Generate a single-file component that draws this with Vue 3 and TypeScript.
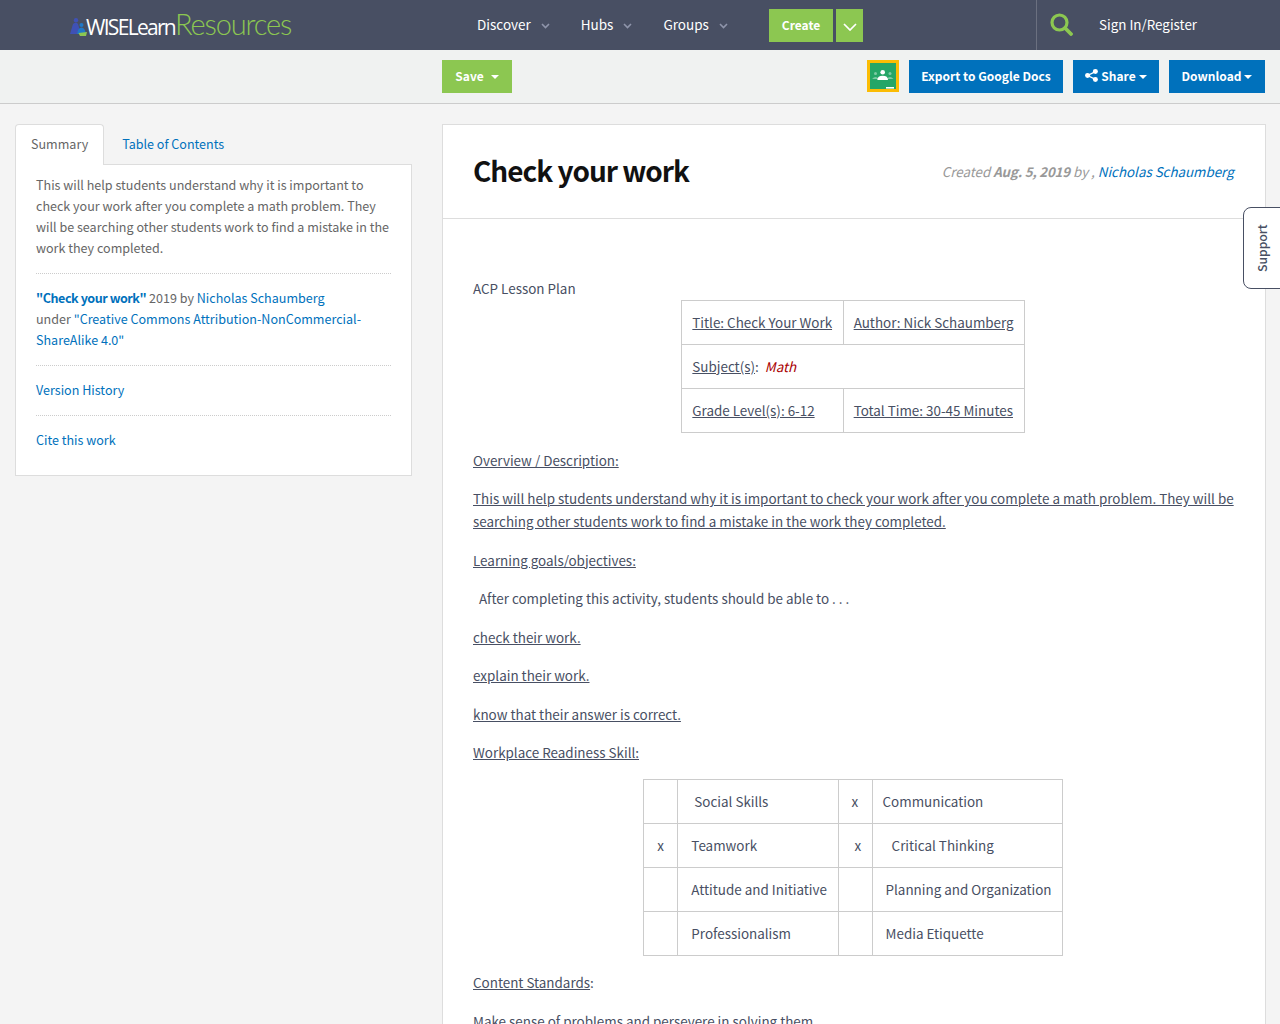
<script setup lang="ts">
const navItems: string[] = ['Discover', 'Hubs', 'Groups']
</script>

<template>
  <div class="page">
    <header class="topbar">
      <div class="logo">
        <svg class="logo-mark" width="19" height="20" viewBox="0 0 19 20">
          <circle cx="7" cy="3.2" r="2.2" fill="#3f51b5" />
          <path d="M1 17 L4 7 Q7 4.5 9 7 L10.5 12 L8 17 Z" fill="#3f51b5" />
          <circle cx="12.5" cy="8" r="2" fill="#1f78c8" />
          <path d="M8 17 Q9 10.5 12.5 10.5 Q16 10.5 17 17 Z" fill="#1f78c8" />
          <path d="M9.5 16 L18 15 L17 19 L11 19 Z" fill="#8cc751" />
        </svg>
        <span class="logo-wise">WISELearn</span><span class="logo-res">Resources</span>
      </div>
      <nav class="nav">
        <a v-for="item in navItems" :key="item" class="nav-item">
          {{ item }}
          <svg width="9" height="6" viewBox="0 0 9 6"><path d="M1 1 L4.5 4.5 L8 1" fill="none" stroke="#8f95ab" stroke-width="1.6" /></svg>
        </a>
      </nav>
      <div class="create-group">
        <button class="btn-green create">Create</button>
        <button class="btn-green create-caret">
          <svg width="14" height="8" viewBox="0 0 14 8"><path d="M1 1 L7 7 L13 1" fill="none" stroke="#fff" stroke-width="1.7" /></svg>
        </button>
      </div>
      <div class="account">
        <svg class="search" width="23" height="23" viewBox="0 0 23 23">
          <circle cx="9.5" cy="9.5" r="7.5" fill="none" stroke="#8cc751" stroke-width="3.2" />
          <path d="M15 15 L21 21" stroke="#8cc751" stroke-width="3.8" stroke-linecap="round" />
        </svg>
        <span class="signin">Sign In/Register</span>
      </div>
    </header>

    <div class="toolbar">
      <button class="btn-green save">Save <i class="caret save-caret"></i></button>
      <div class="tools">
        <span class="classroom">
          <svg width="26" height="26" viewBox="0 0 26 26">
            <rect width="26" height="26" fill="#25a667" />
            <circle cx="5.5" cy="10.5" r="1.5" fill="#7dcba3" />
            <circle cx="20" cy="10.5" r="1.5" fill="#7dcba3" />
            <path d="M2 16 Q5.5 12 9 16 Z M16.5 16 Q20 12 23.5 16 Z" fill="#7dcba3" />
            <circle cx="12.7" cy="9.3" r="2.3" fill="#fff" />
            <path d="M7.3 17 Q7.5 12.7 12.7 12.7 Q18 12.7 18 17 Z" fill="#fff" />
            <rect x="16" y="24" width="8" height="1.6" fill="#fff" />
          </svg>
        </span>
        <button class="btn-blue export">Export to Google Docs</button>
        <button class="btn-blue share">
          <svg width="13" height="13" viewBox="0 0 12 12">
            <circle cx="2.4" cy="6" r="2.3" fill="#fff" />
            <circle cx="9.6" cy="2.4" r="2.3" fill="#fff" />
            <circle cx="9.6" cy="9.6" r="2.3" fill="#fff" />
            <path d="M2.4 6 L9.6 2.4 M2.4 6 L9.6 9.6" stroke="#fff" stroke-width="1.2" />
          </svg>
          Share <i class="caret"></i>
        </button>
        <button class="btn-blue download">Download <i class="caret"></i></button>
      </div>
    </div>

    <div class="content">
      <aside class="sidebar">
        <div class="tabs">
          <span class="tab active">Summary</span>
          <a class="tab link">Table of Contents</a>
        </div>
        <div class="panel">
          <p class="summary">This will help students understand why it is important to check your work after you complete a math problem. They will be searching other students work to find a mistake in the work they completed.</p>
          <div class="section">
            <a class="link strong">"Check your work"</a> 2019 by <a class="link">Nicholas Schaumberg</a><br />
            under <a class="link">"Creative Commons Attribution-NonCommercial-ShareAlike 4.0"</a>
          </div>
          <div class="section"><a class="link">Version History</a></div>
          <div class="section last"><a class="link">Cite this work</a></div>
        </div>
      </aside>

      <main class="card">
        <div class="card-head">
          <h1>Check your work</h1>
          <div class="byline">Created <b>Aug. 5, 2019</b> by , <a class="link">Nicholas Schaumberg</a></div>
        </div>
        <article class="body">
          <div class="acp">ACP Lesson Plan</div>
          <table class="t first">
            <tbody>
              <tr><td><u>Title: Check Your Work</u></td><td><u>Author: Nick Schaumberg</u></td></tr>
              <tr><td colspan="2"><u>Subject(s)</u>:&nbsp; <em class="math">Math</em></td></tr>
              <tr><td><u>Grade Level(s): 6-12</u></td><td><u>Total Time: 30-45 Minutes</u></td></tr>
            </tbody>
          </table>
          <p><u>Overview / Description:</u></p>
          <p class="nowrap"><u>This will help students understand why it is important to check your work after you complete a math problem. They will be<br />searching other students work to find a mistake in the work they completed.</u></p>
          <p><u>Learning goals/objectives:</u></p>
          <p>&nbsp; After completing this activity, students should be able to . . .</p>
          <p><u>check their work.</u></p>
          <p><u>explain their work.</u></p>
          <p><u>know that their answer is correct.</u></p>
          <p class="tight"><u>Workplace Readiness Skill:</u></p>
          <table class="t second">
            <tbody>
              <tr><td class="mark"></td><td>&nbsp;&nbsp;Social Skills</td><td class="mark">&nbsp;x</td><td>Communication</td></tr>
              <tr><td class="mark">&nbsp;x</td><td>&nbsp;Teamwork</td><td class="mark">&nbsp;&nbsp;x</td><td>&nbsp;&nbsp;&nbsp;Critical Thinking</td></tr>
              <tr><td class="mark"></td><td>&nbsp;Attitude and Initiative</td><td class="mark"></td><td>&nbsp;Planning and Organization</td></tr>
              <tr><td class="mark"></td><td>&nbsp;Professionalism</td><td class="mark"></td><td>&nbsp;Media Etiquette</td></tr>
            </tbody>
          </table>
          <p><u>Content Standards</u>:</p>
          <p>Make sense of problems and persevere in solving them.</p>
        </article>
      </main>
    </div>

    <a class="support">Support</a>
  </div>
</template>

<style>
html, body { margin: 0; overflow: hidden; }
</style>

<style scoped>
.page {
  position: relative;
  height: 1024px;
  overflow: hidden;
  background: #f4f4f4;
  font-family: "Noto Sans CJK JP", "Open Sans", sans-serif;
  color: #666;
}
a { text-decoration: none; }
button { border: 0; font-family: inherit; padding: 0; }

.topbar {
  display: flex;
  align-items: center;
  height: 50px;
  background: #484f63;
}
.logo {
  display: flex;
  align-items: baseline;
  padding-left: 69px;
  line-height: 50px;
  flex: none;
  width: 338px;
}
.logo-mark { align-self: center; margin-top: 4px; flex: none; }
.logo-wise {
  font-family: "Open Sans", sans-serif;
  font-size: 21px;
  letter-spacing: -1.7px;
  color: #fff;
  margin-left: -2px;
}
.logo-res {
  font-family: "Lato", sans-serif;
  font-weight: 300;
  font-size: 29px;
  letter-spacing: -1.15px;
  color: #8cc751;
}
.nav { display: flex; margin-left: 70px; flex: none; width: 292px; }
.nav-item {
  display: flex;
  align-items: center;
  gap: 10px;
  margin-right: 31px;
  font-size: 13.5px;
  color: #fff;
  line-height: 23px;
  white-space: nowrap;
  padding-bottom: 2px;
}
.nav-item svg { margin-top: 3px; }
.create-group { display: flex; gap: 3px; flex: none; width: 267px; }
.btn-green { background: #8cc751; color: #fff; font-weight: 700; font-size: 12px; height: 33px; padding-bottom: 2px; }
.create { width: 64px; }
.create-caret { width: 27px; display: flex; align-items: center; justify-content: center; padding: 3px 0 0; }
.account {
  display: flex;
  align-items: center;
  flex: 1;
  height: 50px;
  border-left: 1px solid #6b7080;
  padding-left: 13px;
  gap: 26px;
  box-sizing: border-box;
}
.search { margin-top: -1px; flex: none; }
.signin { font-size: 13.4px; color: #fff; padding-bottom: 2px; }

.toolbar {
  display: flex;
  align-items: center;
  justify-content: space-between;
  height: 54px;
  padding: 0 15px 0 442px;
  background: #f0f2f1;
  border-bottom: 1px solid #ccc;
  box-sizing: border-box;
}
.save { width: 70px; display: flex; align-items: center; justify-content: center; gap: 7px; }
.tools { display: flex; align-items: center; gap: 10px; }
.classroom { width: 26px; height: 26px; border: 3px solid #fbbc04; display: block; line-height: 0; margin-top: -1px; }
.btn-blue {
  display: flex;
  align-items: center;
  justify-content: center;
  gap: 3px;
  height: 33px;
  padding-bottom: 2px;
  background: #0071bc;
  color: #fff;
  font-weight: 700;
  font-size: 12px;
}
.export { width: 154px; }
.share { width: 86px; }
.download { width: 96px; }
.caret {
  display: inline-block;
  width: 0;
  height: 0;
  margin-top: 3px;
  border-top: 4px solid #fff;
  border-left: 4px solid transparent;
  border-right: 4px solid transparent;
}

.content {
  display: flex;
  align-items: flex-start;
  gap: 30px;
  padding: 20px 15px 0;
}
.sidebar { width: 397px; flex: none; font-size: 12.55px; line-height: 21px; }
.tabs { display: flex; position: relative; z-index: 1; margin-bottom: -1px; }
.tab { display: block; padding: 8px 15px 10px; margin-right: 2px; border: 1px solid transparent; border-bottom: 0; border-radius: 4px 4px 0 0; line-height: 21px; }
.tab.active { background: #fff; border-color: #ddd; color: #666; padding-bottom: 11px; }
.link { color: #0071bc; }
.panel {
  background: #fff;
  border: 1px solid #ddd;
  padding: 9px 20px 25px;
}
.summary { margin: 0 0 15px; }
.section { border-top: 1px dotted #ccc; padding: 13px 0 15px; }
.section.last { padding-bottom: 0; }
.strong { font-weight: 700; letter-spacing: -0.45px; }

.card { flex: 1; background: #fff; border: 1px solid #ddd; }
.card-head {
  display: flex;
  align-items: center;
  justify-content: space-between;
  height: 93px;
  padding: 0 31px 0 30px;
  border-bottom: 1px solid #ddd;
}
h1 { margin: -4px 0 0; font-size: 28px; font-weight: 700; color: #111; letter-spacing: -1px; line-height: 40px; }
.byline { font-size: 13.35px; font-style: italic; color: #999; }
.byline b { letter-spacing: -0.2px; }
.body { padding: 58px 31px 0 30px; font-size: 13.43px; line-height: 23.1px; color: #484f63; }
.body p { margin: 0 0 15.4px; }
.body p.nowrap { white-space: nowrap; }
.acp { height: 23px; }
.t { border-collapse: collapse; margin: 0 auto 15.5px; }
.t td { border: 1px solid #ccc; padding: 10px; white-space: nowrap; }
.first { width: 344px; }
.math { color: #a00; }
.second { width: 420px; margin-top: -1px; margin-bottom: 15px; }
.body p.tight { margin-bottom: 15.5px; }
.mark { width: 13px; }

.support {
  position: absolute;
  top: 207px;
  right: -1px;
  width: 38px;
  height: 82px;
  box-sizing: border-box;
  display: flex;
  align-items: center;
  justify-content: center;
  background: #fff;
  border: 1px solid #484f63;
  border-radius: 0 8px 8px 0;
  color: #484f63;
  font-size: 12.2px;
  font-weight: 500;
  writing-mode: vertical-rl;
  transform: rotate(180deg);
}
</style>
